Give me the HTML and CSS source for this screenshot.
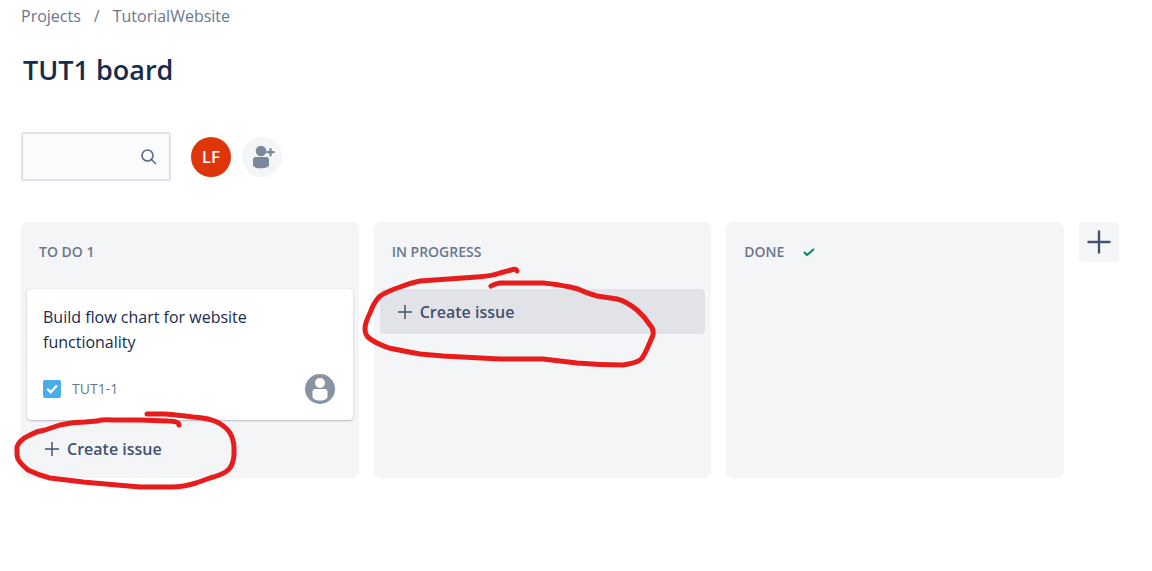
FILE: index.html
```html
<!DOCTYPE html>
<html lang="en">
<head>
  <meta charset="utf-8">
  <meta name="viewport" content="width=device-width, initial-scale=1">
  <title>TUT1 board</title>
  <link rel="stylesheet" href="styles.css">
</head>
<body>
  <main class="page">
    <nav class="breadcrumb" aria-label="Breadcrumb">
      <a href="#">Projects</a>
      <span class="separator">/</span>
      <a href="#">TutorialWebsite</a>
    </nav>
    <h1 class="title">TUT1 board</h1>

    <div class="toolbar">
      <label class="search">
        <input class="search-input" type="text" aria-label="Search this board">
        <svg class="search-icon" viewBox="0 0 16 16" aria-hidden="true"><circle cx="6.5" cy="6.5" r="5.5"/><path d="M10.500 10.500 14.500 14.500"/></svg>
      </label>
      <button class="avatar" type="button">LF</button>
      <button class="add-people" type="button" aria-label="Add people">
        <svg viewBox="0 0 40 40" aria-hidden="true"><circle cx="19" cy="14" r="5.3"/><path d="M11 22.500a2.500 2.500 0 0 1 2.500-2.500h11a2.500 2.500 0 0 1 2.500 2.500v5.500c0 2-3.500 3.200-8 3.200s-8-1.200-8-3.200z"/><path class="plus" d="M28.500 12v6.400M25.300 15.200h6.400"/></svg>
      </button>
    </div>

    <div class="board">
      <section class="column">
        <h2 class="column-title">TO DO 1</h2>
        <article class="card">
          <p class="card-text">Build flow chart for website functionality</p>
          <div class="card-footer">
            <svg class="task-icon" viewBox="0 0 18 18" aria-hidden="true"><rect width="18" height="18" rx="2"/><path d="m5 9.500 2.700 2.700 5.500-6"/></svg>
            <span class="card-key">TUT1-1</span>
            <svg class="assignee" viewBox="0 0 30 30" role="img" aria-label="Unassigned"><circle class="disc" cx="15" cy="15" r="15"/><circle cx="15" cy="9" r="5"/><path d="M7.500 18a3 3 0 0 1 3-3h9a3 3 0 0 1 3 3v4.500c0 2.500-3.500 4-7.500 4s-7.500-1.500-7.500-4z"/></svg>
          </div>
        </article>
        <button class="create" type="button">
          <svg class="create-icon" viewBox="0 0 16 16" aria-hidden="true"><path d="M8 1v14M1 8h14"/></svg>
          Create issue
        </button>
        <svg class="ink" width="338" height="256" viewBox="0 0 338 256" aria-hidden="true"><path d="M126 192L144 192Q156 193 172 195Q189 196 198 201Q206 206 209 211Q212 216 213 224L213 233Q212 243 208 247Q204 252 189 256L175 261Q162 265 151 265L119 265L62 260L29 256Q17 253 7 248Q-4 239-4 233V225Q-2 218 9 213Q16 209 24 208L39 203Q52 200 64 200L76 199Q82 197 92 198H119L147 199Q158 199 158 203"/></svg>
      </section>

      <section class="column">
        <h2 class="column-title">IN PROGRESS</h2>
        <button class="create create-active" type="button">
          <svg class="create-icon" viewBox="0 0 16 16" aria-hidden="true"><path d="M8 1v14M1 8h14"/></svg>
          Create issue
        </button>
        <svg class="ink" width="338" height="256" viewBox="0 0 338 256" aria-hidden="true"><path d="M143 49Q142 46 137 48L126 51Q118 54 103 55L46 59Q36 61 26 65Q14 69 6 74Q0 80-4 91Q-9 101-9 107Q-9 113-5 116Q1 121 15 126Q29 129 46 132L69 134L126 137H169L203 141Q226 143 249 143Q262 141 266 138Q269 136 273 127L279 113Q280 107 276 103Q270 94 263 88Q252 79 243 77L223 74Q212 71 204 67L196 65Q181 62 169 61H126Q120 62 117 64"/></svg>
      </section>

      <section class="column">
        <h2 class="column-title">DONE
          <svg class="done-icon" viewBox="0 0 14 10" aria-hidden="true"><path d="m2 5 3 3 7-6"/></svg>
        </h2>
      </section>

      <button class="add-column" type="button" aria-label="Add column">
        <svg viewBox="0 0 24 24" aria-hidden="true"><path d="M12 1.500v21M1.500 12h21"/></svg>
      </button>
    </div>
  </main>
</body>
</html>
```
FILE: styles.css
```css
* {
  box-sizing: border-box;
}

body {
  margin: 0;
  background: #fff;
  color: #172b4d;
  font-family: "Segoe UI", "Open Sans", "Noto Sans", sans-serif;
}

button,
input {
  font: inherit;
  border: 0;
}

button {
  padding: 0;
  cursor: pointer;
}

svg {
  flex: none;
  fill: none;
}

.page {
  padding: 4px 33px 32px 21px;
}

.breadcrumb {
  display: flex;
  gap: 13px;
  font-size: 16px;
  line-height: 24px;
  color: #6b778c;
}

.breadcrumb a {
  color: inherit;
  text-decoration: none;
}

.title {
  margin: 22px 0 0;
  padding-left: 2px;
  font-size: 27px;
  line-height: 40px;
  font-weight: 600;
}

.toolbar {
  display: flex;
  align-items: center;
  margin-top: 42px;
}

.search {
  display: flex;
  align-items: center;
  width: 150px;
  height: 49px;
  padding-right: 12px;
  border: 2px solid #dfe1e6;
  border-radius: 3px;
  background: #fafbfc;
}

.search-input {
  flex: 1;
  min-width: 0;
  height: 40px;
  padding: 0 8px;
  background: transparent;
  outline: 0;
}

.search-icon {
  width: 16px;
  height: 16px;
  stroke: #5e6c84;
  stroke-width: 1.6;
  stroke-linecap: round;
}

.avatar,
.add-people {
  width: 40px;
  height: 40px;
  border-radius: 50%;
}

.avatar {
  margin-left: 20px;
  background: #de350b;
  color: #fff;
  font-size: 17px;
  font-weight: 600;
}

.add-people {
  margin-left: 11px;
  background: #f4f5f7;
}

.add-people svg {
  display: block;
  fill: #7a869a;
}

.plus {
  stroke: #7a869a;
  stroke-width: 2.2;
  stroke-linecap: round;
}

.board {
  display: flex;
  align-items: flex-start;
  gap: 15px;
  margin-top: 41px;
}

.column {
  position: relative;
  flex: 1;
  align-self: stretch;
  min-width: 0;
  padding: 18px 6px 7px;
  border-radius: 7px;
  background: #f4f5f7;
}

.column-title {
  display: flex;
  align-items: center;
  gap: 18px;
  margin: 0 0 25px;
  padding-left: 12px;
  font-size: 14px;
  line-height: 24px;
  font-weight: 600;
  color: #6b778c;
}

.done-icon {
  width: 14px;
  height: 10px;
  stroke: #00875a;
  stroke-width: 2;
}

.card {
  padding: 16px 18px 16px 16px;
  border-radius: 4px;
  background: #fff;
  box-shadow: 0 1px 2px #091e4240, 0 0 1px #091e4230;
}

.card-text {
  max-width: 240px;
  margin: 0;
  font-size: 16px;
  line-height: 25px;
}

.card-footer {
  display: flex;
  align-items: center;
  margin-top: 19px;
}

.task-icon {
  width: 18px;
  height: 18px;
}

.task-icon rect {
  fill: #4bade8;
}

.task-icon path {
  stroke: #fff;
  stroke-width: 2.4;
  stroke-linecap: round;
}

.card-key {
  margin-left: 11px;
  font-size: 14px;
  font-weight: 500;
  line-height: 24px;
  color: #6b778c;
}

.assignee {
  width: 30px;
  height: 30px;
  margin-left: auto;
  fill: #fff;
}

.disc {
  fill: #8993a4;
}

.create {
  display: flex;
  align-items: center;
  gap: 7px;
  width: 100%;
  height: 45px;
  margin-top: 6px;
  padding-left: 17px;
  border-radius: 4px;
  background: transparent;
  color: #42526e;
  font-size: 16px;
  font-weight: 600;
}

.create-active {
  margin-top: 0;
  background: #e2e3e8;
}

.create-icon {
  width: 16px;
  height: 16px;
  stroke: #42526e;
  stroke-width: 1.5;
}

.ink {
  position: absolute;
  top: 0;
  left: 0;
  z-index: 1;
  overflow: visible;
  pointer-events: none;
  stroke: #e71d1d;
  stroke-width: 5;
  stroke-linecap: round;
  stroke-linejoin: round;
}

.add-column {
  display: grid;
  place-items: center;
  width: 40px;
  height: 40px;
  border-radius: 3px;
  background: #f4f5f7;
}

.add-column svg {
  width: 24px;
  height: 24px;
  stroke: #42526e;
  stroke-width: 2.4;
  stroke-linecap: round;
}
```
